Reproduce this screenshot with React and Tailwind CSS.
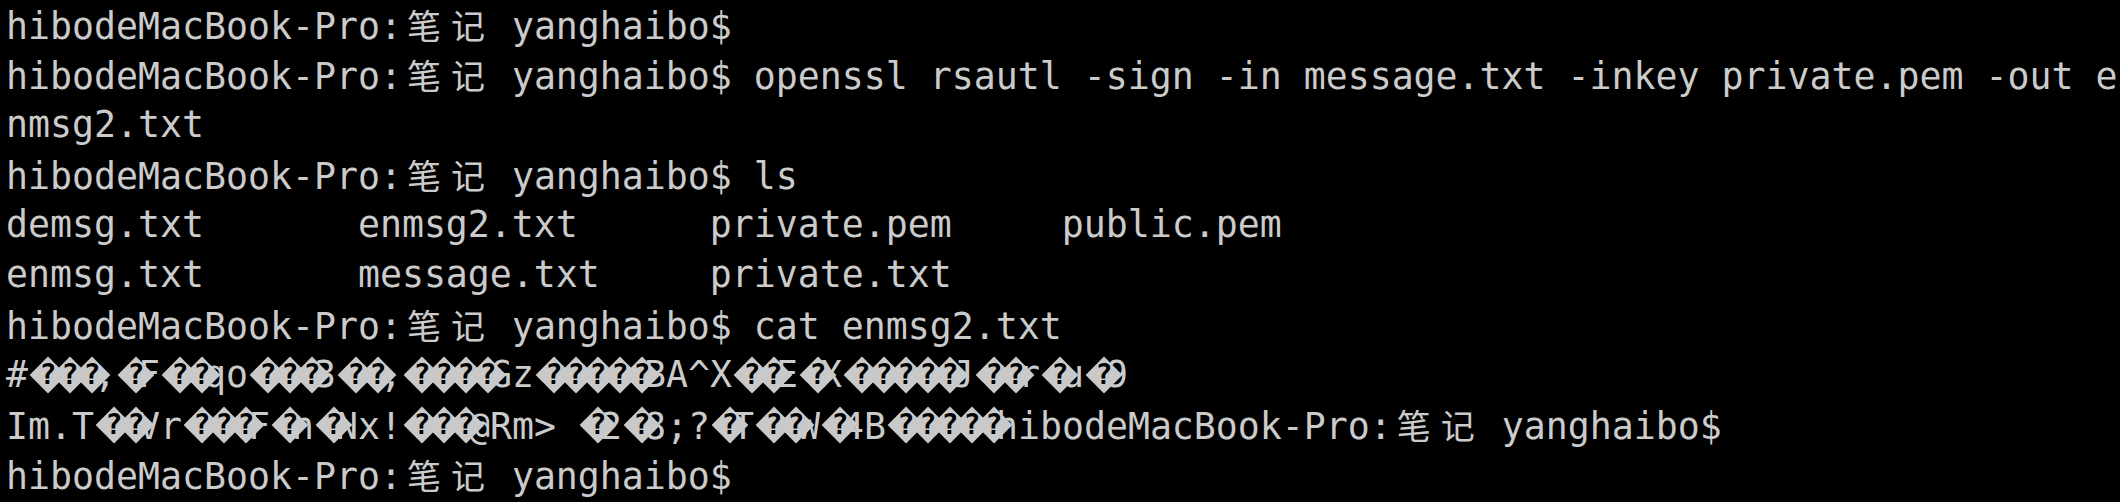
import React from "react";

// terminal session, one entry per screen row
const lines = [
  "hibodeMacBook-Pro:笔记 yanghaibo$",
  "hibodeMacBook-Pro:笔记 yanghaibo$ openssl rsautl -sign -in message.txt -inkey private.pem -out e",
  "nmsg2.txt",
  "hibodeMacBook-Pro:笔记 yanghaibo$ ls",
  "demsg.txt       enmsg2.txt      private.pem     public.pem",
  "enmsg.txt       message.txt     private.txt",
  "hibodeMacBook-Pro:笔记 yanghaibo$ cat enmsg2.txt",
  "#\uFFFD\uFFFD\uFFFD,\uFFFDF\uFFFD\uFFFDqo\uFFFD\uFFFD\uFFFD3\uFFFD\uFFFD,\uFFFD\uFFFD\uFFFD\uFFFDGz\uFFFD\uFFFD\uFFFD\uFFFD\uFFFDBA^X\uFFFD\uFFFDE\uFFFDX\uFFFD\uFFFD\uFFFD\uFFFD\uFFFDJ\uFFFD\uFFFDr\uFFFDu\uFFFD9",
  "Im.T\uFFFD\uFFFDVr\uFFFD\uFFFD\uFFFDF\uFFFDn\uFFFDNx!\uFFFD\uFFFD\uFFFD@Rm> \uFFFD2\uFFFD8;?\uFFFDT\uFFFD\uFFFDW\uFFFD4B\uFFFD\uFFFD\uFFFD\uFFFD\uFFFDhibodeMacBook-Pro:笔记 yanghaibo$",
  "hibodeMacBook-Pro:笔记 yanghaibo$",
];

const isWide = (ch) => /[\u3000-\u9fff]/.test(ch);

const Replacement = () => (
  <span className="relative inline-block w-[22px] h-[50px] align-top">
    <span className="absolute left-[2px] top-[7px] w-[36px] h-[36px] flex items-center justify-center">
      <span className="absolute inset-[5px] rotate-45 bg-[#c9c9c9]" />
      <span className="relative text-black font-bold text-[28px] leading-none">?</span>
    </span>
  </span>
);

const Row = ({ text }) => {
  const parts = [];
  let buf = "";
  const flush = () => {
    if (buf) parts.push(buf);
    buf = "";
  };
  for (const ch of text) {
    if (ch === "\uFFFD") {
      flush();
      parts.push(<Replacement key={parts.length} />);
    } else if (isWide(ch)) {
      flush();
      parts.push(
        <span
          key={parts.length}
          className="inline-block w-[44px] text-center font-['Noto_Sans_CJK_SC',sans-serif] text-[34px]"
        >
          {ch}
        </span>
      );
    } else {
      buf += ch;
    }
  }
  flush();
  return <div className="h-[50px] leading-[50px] whitespace-pre">{parts}</div>;
};

export default function App() {
  return (
    <div className="w-[2120px] h-[502px] overflow-hidden bg-black pl-[6px] text-[#cbcbcb] font-['DejaVu_Sans_Mono',monospace] text-[36.54px]">
      {lines.map((l, i) => (
        <Row key={i} text={l} />
      ))}
    </div>
  );
}
